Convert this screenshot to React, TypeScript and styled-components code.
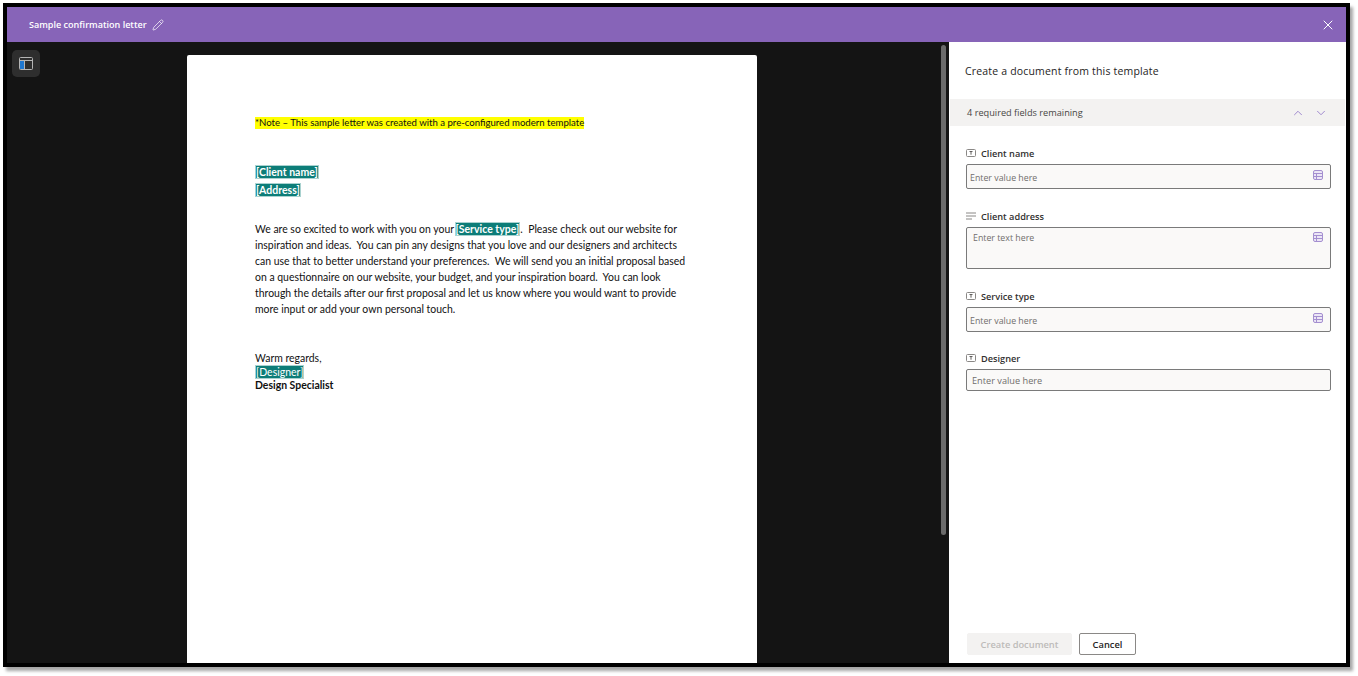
import * as React from 'react';
import { ChevronDown, ChevronUp, Pencil, X } from 'lucide-react';
import { createGlobalStyle, styled } from 'styled-components';

const GlobalStyle = createGlobalStyle`
  html, body {
    margin: 0;
    padding: 0;
    background: #ffffff;
    overflow: hidden;
  }
  body {
    font-family: "Open Sans", "Noto Sans", sans-serif;
  }
`;

const Screen = styled.div`
  width: 1358px;
  height: 676px;
  padding: 3px 0 0 3px;
  box-sizing: border-box;
`;

const Frame = styled.div`
  width: 1347px;
  height: 664px;
  box-sizing: border-box;
  border: 4px solid #000;
  display: flex;
  flex-direction: column;
  overflow: hidden;
  box-shadow: 3px 4px 3px rgba(0, 0, 0, 0.35);
`;

const Header = styled.header`
  height: 35px;
  flex-shrink: 0;
  background-color: #8764b8;
  color: #fff;
  display: flex;
  align-items: center;
  padding: 0 10px 0 22px;
`;

const Title = styled.div`
  font-size: 9.05px;
  font-weight: 600;
  margin-right: 5px;
`;

const CloseButton = styled.div`
  margin-left: auto;
  display: flex;
`;

const Body = styled.div`
  flex: 1;
  min-height: 0;
  display: flex;
`;

const Viewer = styled.main`
  position: relative;
  flex: 1;
  min-width: 0;
  background-color: #141414;
  padding: 13px 0 0 180px;
  overflow: hidden;
`;

const ToggleButton = styled.div`
  position: absolute;
  left: 5px;
  top: 8px;
  width: 28px;
  height: 27px;
  border-radius: 5px;
  background-color: #2e2e2e;
  display: flex;
  align-items: center;
  justify-content: center;
`;

const ScrollThumb = styled.div`
  position: absolute;
  right: 3px;
  top: 3px;
  width: 5px;
  height: 490px;
  border-radius: 3px;
  background-color: #6b6b6b;
`;

const Page = styled.article`
  width: 570px;
  height: 640px;
  box-sizing: border-box;
  background-color: #fff;
  border-radius: 2px 2px 0 0;
  padding: 61px 68px 0;
  font-family: "Lato", "Liberation Sans", sans-serif;
  font-size: 10.45px;
  color: #111;
`;

const Note = styled.div`
  display: inline-block;
  background-color: #ffff00;
  line-height: 12px;
  height: 12px;
  font-size: 9.6px;
  white-space: pre;
`;

const ChipRow = styled.div<{ $gap: number }>`
  margin-top: ${(p) => p.$gap}px;
  height: 13px;
  display: flex;
`;

const Chip = styled.span<{ $light?: boolean }>`
  display: inline-block;
  box-sizing: border-box;
  height: 14px;
  line-height: 12px;
  font-size: 10.5px;
  background-color: #0d7d78;
  color: #fff;
  font-weight: ${(p) => (p.$light ? 400 : 700)};
  border: 1px solid #a9d2d0;
  white-space: pre;
`;

const Paragraph = styled.div`
  margin-top: 25px;
  line-height: 16px;
`;

const Line = styled.div`
  white-space: pre;
  height: 16px;
`;

const InlineChip = styled(Chip)`
  vertical-align: top;
  margin: 1px 0 0 -2px;
`;

const Signature = styled.div`
  margin-top: 35px;
  line-height: 13.5px;
`;

const SignatureChip = styled(Chip)`
  display: block;
  width: fit-content;
  margin-top: -1px;
`;

const Bold = styled.div`
  font-weight: 700;
`;

const Panel = styled.aside`
  width: 397px;
  flex-shrink: 0;
  background-color: #fff;
  display: flex;
  flex-direction: column;
  color: #252423;
`;

const PanelTitle = styled.h2`
  margin: 0;
  height: 57px;
  box-sizing: border-box;
  padding: 21px 0 0 16px;
  font-size: 10.5px;
  line-height: 16px;
  font-weight: 400;
  letter-spacing: 0.18px;
`;

const StatusBand = styled.div`
  height: 27px;
  margin: 0 1px;
  background-color: #f3f2f1;
  display: flex;
  align-items: center;
  padding: 0 17px;
  font-size: 9.2px;
  color: #484644;
`;

const StatusArrows = styled.div`
  margin-left: auto;
  display: flex;
  gap: 9px;
  color: #9a82cc;
`;

const Form = styled.div`
  flex: 1;
  padding: 20px 15px 0 17px;
  display: flex;
  flex-direction: column;
`;

const Field = styled.div<{ $bottom: number }>`
  margin-bottom: ${(p) => p.$bottom}px;
`;

const Label = styled.div`
  display: flex;
  align-items: center;
  gap: 5px;
  height: 14px;
  margin-bottom: 4px;
  font-size: 9.2px;
  font-weight: 600;
  color: #323130;
`;

const Input = styled.div<{ $height: number; $top: number; $left: number; $size: number }>`
  height: ${(p) => p.$height}px;
  box-sizing: border-box;
  border: 1px solid #7a7a7a;
  border-radius: 2px;
  background-color: #faf9f8;
  display: flex;
  justify-content: space-between;
  padding: ${(p) => p.$top}px 7px 0 ${(p) => p.$left}px;
  font-size: ${(p) => p.$size}px;
  line-height: 13px;
  color: #706e6c;
`;

const TableSlot = styled.span<{ $shift: number }>`
  display: flex;
  margin-top: ${(p) => p.$shift}px;
`;

const Footer = styled.footer`
  height: 30px;
  flex-shrink: 0;
  padding: 0 0 0 18px;
  display: flex;
  gap: 7px;
  font-size: 9.3px;
  font-weight: 600;
`;

const Button = styled.div<{ $disabled?: boolean }>`
  height: 22px;
  box-sizing: border-box;
  border-radius: 2px;
  display: flex;
  align-items: center;
  justify-content: center;
  width: ${(p) => (p.$disabled ? 105 : 57)}px;
  background-color: ${(p) => (p.$disabled ? '#f3f2f1' : '#fff')};
  color: ${(p) => (p.$disabled ? '#bdbbb9' : '#252423')};
  border: 1px solid ${(p) => (p.$disabled ? '#f3f2f1' : '#8a8886')};
`;

const TextFieldIcon = () => (
  <svg width="10" height="8" viewBox="0 0 10 8" fill="none">
    <rect x="0.5" y="0.5" width="9" height="7" rx="1" stroke="#8a8886" />
    <path d="M3.5 2.5h3M5 2.5v3.2" stroke="#605e5c" />
  </svg>
);

const MultiLineIcon = () => (
  <svg width="10" height="8" viewBox="0 0 10 8" fill="none">
    <path d="M0 1h10M0 4h10M0 7h6" stroke="#8a8886" />
  </svg>
);

const TableIcon = () => (
  <svg width="10" height="10" viewBox="0 0 10 10" fill="#ece6f6">
    <rect x="0.5" y="0.5" width="9" height="9" rx="1.5" stroke="#a48fd0" />
    <path d="M0.5 3.5h9M0.5 6.5h9M3.5 3.5v6" stroke="#a48fd0" fill="none" />
  </svg>
);

const PanelIcon = () => (
  <svg width="14" height="13" viewBox="0 0 14 13" fill="none">
    <rect x="1" y="4" width="4" height="8" fill="#1f78d1" />
    <rect x="0.5" y="0.5" width="13" height="12" rx="1" stroke="#b5b5b5" />
    <path d="M1 3.5h12M5.5 4v8" stroke="#b5b5b5" />
  </svg>
);

type FieldData = {
  label: string;
  placeholder: string;
  height: number;
  top: number;
  left: number;
  size: number;
  bottom: number;
  multiline?: boolean;
  tableShift?: number;
};

const fields: FieldData[] = [
  { label: 'Client name', placeholder: 'Enter value here', height: 25, top: 7, left: 3, size: 8.8, bottom: 20, tableShift: -2 },
  { label: 'Client address', placeholder: 'Enter text here', height: 42, top: 4, left: 6, size: 8.8, bottom: 20, multiline: true, tableShift: 0 },
  { label: 'Service type', placeholder: 'Enter value here', height: 25, top: 7, left: 3, size: 8.8, bottom: 19, tableShift: -2 },
  { label: 'Designer', placeholder: 'Enter value here', height: 22, top: 4, left: 5, size: 9.2, bottom: 0 },
];

export default function App() {
  return (
    <Screen>
      <GlobalStyle />
      <Frame>
        <Header>
          <Title>Sample confirmation letter</Title>
          <Pencil size={12} strokeWidth={1.4} />
          <CloseButton>
            <X size={16} strokeWidth={1.5} />
          </CloseButton>
        </Header>
        <Body>
          <Viewer>
            <ToggleButton>
              <PanelIcon />
            </ToggleButton>
            <ScrollThumb />
            <Page>
              <Note>*Note – This sample letter was created with a pre-configured modern template</Note>
              <ChipRow $gap={36}>
                <Chip>[Client name]</Chip>
              </ChipRow>
              <ChipRow $gap={5}>
                <Chip>[Address]</Chip>
              </ChipRow>
              <Paragraph>
                <Line>
                  We are so excited to work with you on your <InlineChip>[Service type]</InlineChip>.  Please check out our website for
                </Line>
                <Line>inspiration and ideas.  You can pin any designs that you love and our designers and architects</Line>
                <Line>can use that to better understand your preferences.  We will send you an initial proposal based</Line>
                <Line>on a questionnaire on our website, your budget, and your inspiration board.  You can look</Line>
                <Line>through the details after our first proposal and let us know where you would want to provide</Line>
                <Line>more input or add your own personal touch.</Line>
              </Paragraph>
              <Signature>
                <div>Warm regards,</div>
                <SignatureChip $light>[Designer]</SignatureChip>
                <Bold>Design Specialist</Bold>
              </Signature>
            </Page>
          </Viewer>
          <Panel>
            <PanelTitle>Create a document from this template</PanelTitle>
            <StatusBand>
              4 required fields remaining
              <StatusArrows>
                <ChevronUp size={14} strokeWidth={1.6} />
                <ChevronDown size={14} strokeWidth={1.6} />
              </StatusArrows>
            </StatusBand>
            <Form>
              {fields.map((f) => (
                <Field key={f.label} $bottom={f.bottom}>
                  <Label>
                    {f.multiline ? <MultiLineIcon /> : <TextFieldIcon />}
                    {f.label}
                  </Label>
                  <Input $height={f.height} $top={f.top} $left={f.left} $size={f.size}>
                    {f.placeholder}
                    {f.tableShift !== undefined ? (
                      <TableSlot $shift={f.tableShift}>
                        <TableIcon />
                      </TableSlot>
                    ) : null}
                  </Input>
                </Field>
              ))}
            </Form>
            <Footer>
              <Button $disabled>Create document</Button>
              <Button>Cancel</Button>
            </Footer>
          </Panel>
        </Body>
      </Frame>
    </Screen>
  );
}
